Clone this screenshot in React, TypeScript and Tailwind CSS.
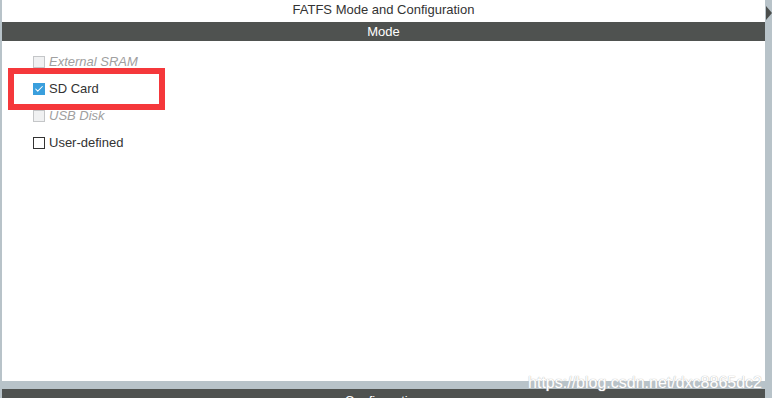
import { Check } from 'lucide-react'

interface ModeOption {
  label: string
  state: 'disabled' | 'checked' | 'unchecked'
}

const options: ModeOption[] = [
  { label: 'External SRAM', state: 'disabled' },
  { label: 'SD Card', state: 'checked' },
  { label: 'USB Disk', state: 'disabled' },
  { label: 'User-defined', state: 'unchecked' },
]

function Box({ state }: { state: ModeOption['state'] }) {
  if (state === 'checked') {
    return (
      <span className="flex h-[12px] w-[12px] items-center justify-center bg-[#3a9fdd]">
        <Check size={10} strokeWidth={2.5} className="text-white" />
      </span>
    )
  }
  if (state === 'disabled') {
    return <span className="h-[12px] w-[12px] border border-[#c4c6c8] bg-[#f0f1f2]" />
  }
  return <span className="h-[12px] w-[12px] border border-[#333333] bg-white" />
}

export default function App() {
  return (
    <div className="flex h-[398px] w-[772px] overflow-hidden bg-[#b8c3c9] font-['Liberation_Sans',Arial,sans-serif] text-[13px]">
      <div className="w-[2px] shrink-0" />
      <div className="relative flex flex-1 flex-col overflow-hidden">
        <div className="h-[22px] shrink-0 bg-white pt-[2px] text-center leading-[15px] text-[#333333]">
          FATFS Mode and Configuration
        </div>
        <div className="flex h-[19px] shrink-0 items-center justify-center bg-[#4f5250] text-white">Mode</div>
        <div className="relative h-[340px] shrink-0 bg-white pt-[7px]">
          {options.map((o) => (
            <div key={o.label} className="flex h-[27px] items-center gap-[4px] pl-[31px]">
              <Box state={o.state} />
              <span
                className={
                  o.state === 'disabled' ? 'italic text-[#a0a0a0]' : 'text-[#333333]'
                }
              >
                {o.label}
              </span>
            </div>
          ))}
          <div className="absolute left-[6px] top-[27px] h-[42px] w-[157px] border-[6px] border-[#f5383b]" />
        </div>
        <div className="h-[8px] shrink-0" />
        <div className="flex h-[20px] shrink-0 justify-center bg-[#4f5250] pt-[2px] text-white">Configuration</div>
        <span className="absolute right-[3px] top-[371px] text-[16px] text-white [text-shadow:0_0_1px_#b8b8b8,0_0_1px_#c8c8c8]">
          https://blog.csdn.net/dxc8865dc2
        </span>
      </div>
      <div className="relative w-[7px] shrink-0">
        <div className="absolute left-[1px] top-[6px] h-0 w-0 border-y-[7px] border-l-[6px] border-y-transparent border-l-[#4a4d4c]" />
      </div>
    </div>
  )
}
